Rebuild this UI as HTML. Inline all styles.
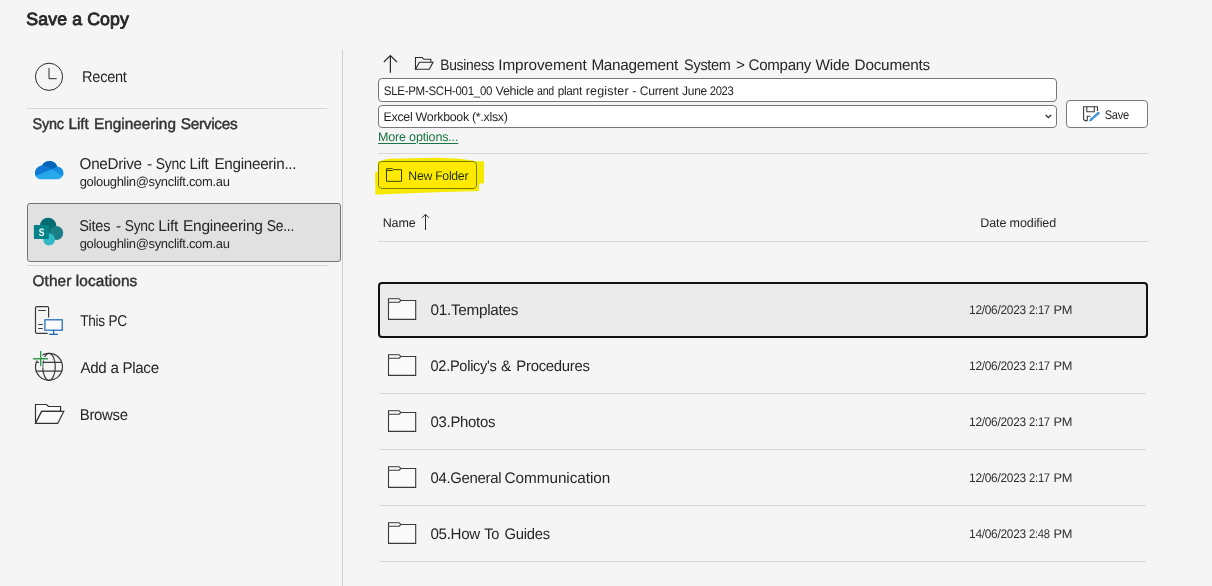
<!DOCTYPE html>
<html lang="en">
<head>
<meta charset="utf-8">
<title>Save a Copy</title>
<style>
html,body{margin:0;padding:0;}
body{width:1212px;height:586px;overflow:hidden;background:#f5f5f5;font-family:"Liberation Sans",sans-serif;color:#262626;text-rendering:geometricPrecision;}
#app{position:relative;width:1212px;height:586px;overflow:hidden;background:#f5f5f5;}
.t{position:absolute;white-space:pre;line-height:1;margin:0;font-weight:400;transform-origin:0 0;}
.w{position:absolute;top:0;transform-origin:0 0;}
.hr{position:absolute;height:1px;background:#d6d6d6;}
.vr{position:absolute;width:1px;background:#cdcdcd;}
.navsel{position:absolute;left:27px;top:203px;width:312px;height:57px;border:1px solid #747474;border-radius:3px;background:#e1e1e1;}
.inp{position:absolute;left:378px;width:677px;border:1px solid #767676;border-radius:4px;background:#fff;}
.btn{position:absolute;border:1px solid #7a7a7a;border-radius:4px;background:#fff;}
.row{position:absolute;left:380px;width:766px;height:55px;border-bottom:1px solid #d6d6d6;}
.rowsel{position:absolute;left:378px;top:282px;width:766px;height:52px;border:2px solid #111;border-radius:4px;background:#ebebeb;}
a.t{text-decoration:underline;text-underline-offset:1.5px;text-decoration-thickness:1px;}
svg{position:absolute;overflow:visible;}
.hl{mix-blend-mode:darken;}
</style>
</head>
<body>
<div id="app">
  <header><h1 class="t" style="left:26.22px;top:11px;letter-spacing:0.143px;font-size:17.7px;color:#262626;-webkit-text-stroke:0.85px #262626;">Save a Copy</h1></header>

  <nav id="places">
    <div class="place">
      <svg style="left:34px;top:62px" width="30" height="30" viewBox="0 0 30 30"><circle cx="15" cy="14.8" r="13.6" fill="none" stroke="#2b2b2b" stroke-width="1"/><path d="M15 6V16.700H22.700" fill="none" stroke="#2b2b2b" stroke-width="1"/></svg>
      <span class="t" style="left:82px;top:70px;letter-spacing:-0.300px;transform:translateX(0.07px) scaleX(0.9364);font-size:15.6px;color:#262626;">Recent</span>
    </div>
    <div class="hr" style="left:27px;top:108px;width:300px"></div>
    <h2 class="t" style="left:0;top:117px;font-size:15.4px;color:#333333;-webkit-text-stroke:0.45px #333333;"><span class="w" style="left:32px;letter-spacing:-0.300px;transform:translateX(0.62px) scaleX(0.9394);">Sync</span> <span class="w" style="left:68.58px;letter-spacing:-0.123px;">Lift</span> <span class="w" style="left:94.07px;letter-spacing:-0.025px;">Engineering</span> <span class="w" style="left:180px;letter-spacing:-0.300px;transform:translateX(0.83px) scaleX(0.9980);">Services</span></h2>
    <div class="place">
      <svg style="left:34.800px;top:160.800px" width="28.500" height="18.200" viewBox="0 0 28.500 18.200">
        <defs><clipPath id="cloud"><path d="M5.800 18.200C2.400 18.200 0 15.600 0 12.200C0 8.300 3 4.900 7 4.400C8.400 1.800 11.200 0 14.400 0C18.200 0 21.400 2.400 22.400 5.800C25.800 6 28.400 8.700 28.400 12C28.400 15.400 25.800 18.200 22.600 18.200Z"/></clipPath></defs>
        <g clip-path="url(#cloud)">
          <rect x="-1" y="-1" width="31" height="21" fill="#28a8ea"/>
          <polygon points="7.200,3.900 17,8.300 1.500,14.400 -1,14.400 -1,-1 7.200,-1" fill="#0f78d4"/>
          <polygon points="17,8.300 22.600,5.600 30,4 30,14 27.300,15.100" fill="#1490df"/>
          <polygon points="7.200,3.900 7.200,-1 23,-1 22.600,5.600 17,8.300" fill="#0364b8"/>
        </g>
      </svg>
      <span class="t" style="left:0;top:157px;font-size:15.6px;color:#262626;"><span class="w" style="left:79px;letter-spacing:-0.300px;transform:translateX(0.56px) scaleX(0.9798);">OneDrive</span> <span class="w" style="left:147.11px;letter-spacing:0.000px;">-</span> <span class="w" style="left:155px;letter-spacing:-0.300px;transform:translateX(0.69px) scaleX(0.8953);">Sync</span> <span class="w" style="left:189px;letter-spacing:-0.300px;transform:translateX(0.59px) scaleX(0.9619);">Lift</span> <span class="w" style="left:214px;letter-spacing:-0.300px;transform:translateX(0.40px) scaleX(0.9782);">Engineerin...</span></span> <span class="t" style="left:79px;top:175px;letter-spacing:-0.300px;transform:translateX(0.63px) scaleX(0.9953);font-size:13.0px;color:#262626;">goloughlin@synclift.com.au</span>
    </div>
    <div class="navsel"></div>
    <div class="place">
      <svg style="left:33px;top:216px" width="32" height="32" viewBox="33 216 32 32">
        <circle cx="48.100" cy="225.800" r="8.100" fill="#036c70"/>
        <circle cx="56.300" cy="233" r="6.900" fill="#1a7f86"/>
        <circle cx="49.100" cy="239.500" r="5.900" fill="#30b8c6"/>
        <rect x="33.900" y="225" width="15" height="14" rx="0.800" fill="#038387"/>
        <text x="38.700" y="235.900" textLength="5.700" lengthAdjust="spacingAndGlyphs" font-family="Liberation Sans, sans-serif" font-weight="700" font-size="10.900" fill="#ffffff">S</text>
      </svg>
      <span class="t" style="left:0;top:219px;font-size:15.6px;color:#262626;"><span class="w" style="left:79px;letter-spacing:-0.300px;transform:translateX(0.14px) scaleX(0.9379);">Sites</span> <span class="w" style="left:116.08px;letter-spacing:0.000px;">-</span> <span class="w" style="left:124px;letter-spacing:-0.300px;transform:translateX(0.73px) scaleX(0.8886);">Sync</span> <span class="w" style="left:158.35px;letter-spacing:-0.255px;">Lift</span> <span class="w" style="left:183px;letter-spacing:-0.300px;transform:translateX(0.02px) scaleX(0.9957);">Engineering</span> <span class="w" style="left:266px;letter-spacing:-0.300px;transform:translateX(0.69px) scaleX(0.8952);">Se...</span></span> <span class="t" style="left:79px;top:237px;letter-spacing:-0.300px;transform:translateX(0.63px) scaleX(0.9953);font-size:13.0px;color:#262626;">goloughlin@synclift.com.au</span>
    </div>
    <div class="hr" style="left:27px;top:265px;width:300px"></div>
    <h2 class="t" style="left:32.50px;top:274px;letter-spacing:0.090px;font-size:15.4px;color:#333333;-webkit-text-stroke:0.45px #333333;">Other locations</h2>
    <div class="place">
      <svg style="left:34px;top:305px" width="30" height="31" viewBox="34 305 30 31" fill="none" stroke-width="1.200">
        <path d="M48.600 317.600V307.800Q48.600 306.600 47.400 306.600H36.700Q35.500 306.600 35.500 307.800V332.100Q35.500 333.300 36.700 333.300H47.700" stroke="#3a3a3a"/>
        <path d="M38.300 310.500H45.800M38.300 324.500H42.800M38.300 328.500H42.800" stroke="#3a3a3a"/>
        <rect x="44.900" y="319.800" width="17.300" height="10.400" fill="#fafafa" stroke="#1565b8"/>
        <path d="M53.600 330.500V334.400M49.100 334.400H58" stroke="#1565b8"/>
      </svg>
      <span class="t" style="left:80px;top:314px;letter-spacing:-0.300px;transform:translateX(0.18px) scaleX(0.8762);font-size:15.6px;color:#262626;">This PC</span>
    </div>
    <div class="place">
      <svg style="left:32px;top:350px" width="32" height="32" viewBox="32 350 32 32" fill="none" stroke-width="1.200">
        <circle cx="49" cy="366.800" r="13.500" stroke="#3a3a3a"/>
        <ellipse cx="49" cy="366.800" rx="6.300" ry="13.500" stroke="#3a3a3a"/>
        <path d="M36.300 362.300H61.700M35.700 371.200H62.300" stroke="#3a3a3a"/>
        <path d="M33 358.700H48.100M40.700 351V366.100" stroke="#f5f5f5" stroke-width="3.600" stroke-linecap="square"/>
        <path d="M33 358.700H48.100M40.700 351V366.100" stroke="#2f9e4f" stroke-width="1.400"/>
      </svg>
      <span class="t" style="left:80px;top:361px;letter-spacing:-0.300px;transform:translateX(0.47px) scaleX(0.9688);font-size:15.6px;color:#262626;">Add a Place</span>
    </div>
    <div class="place">
      <svg style="left:34px;top:403px" width="32" height="22" viewBox="34 403 32 22" fill="#fafafa" stroke="#333" stroke-width="1.200" stroke-linejoin="miter">
        <path d="M35.500 423.400V404.500H46.600L48.400 406.500H60.600V411.400H41.600Z"/>
        <path d="M35.500 423.400L41.600 411.400H63.800L57.700 423.400Z"/>
      </svg>
      <span class="t" style="left:79px;top:408px;letter-spacing:-0.300px;transform:translateX(0.70px) scaleX(0.9591);font-size:15.6px;color:#262626;">Browse</span>
    </div>
  </nav>
  <div class="vr" style="left:342px;top:50px;height:536px"></div>

  <main>
    <div class="crumbs">
      <svg style="left:382px;top:54px" width="18" height="20" viewBox="382 54 18 20" fill="none" stroke="#2b2b2b" stroke-width="1.200"><path d="M390.400 72.800V55.600M383.900 62L390.400 55.500L396.900 62"/></svg>
      <svg style="left:414px;top:56px" width="20" height="15" viewBox="414 56 20 15" fill="none" stroke="#2b2b2b" stroke-width="1.100"><path d="M415.500 69.300V57.500H422.200L423.900 59.300H430.800V62.200"/><path d="M415.500 69.300L419.400 62.200H433L429.300 69.300Z"/></svg>
      <span class="t" style="left:0;top:58px;font-size:15.3px;color:#262626;"><span class="w" style="left:440px;letter-spacing:-0.300px;transform:translateX(0.18px) scaleX(0.9058);">Business</span> <span class="w" style="left:498.30px;letter-spacing:-0.085px;">Improvement</span> <span class="w" style="left:591.38px;letter-spacing:-0.267px;">Management</span> <span class="w" style="left:684px;letter-spacing:-0.300px;transform:translateX(0.08px) scaleX(0.9459);">System</span> <span class="w" style="left:736.03px;letter-spacing:0.000px;">&gt;</span> <span class="w" style="left:748px;letter-spacing:-0.300px;transform:translateX(0.62px) scaleX(0.9856);">Company</span> <span class="w" style="left:815.43px;letter-spacing:-0.186px;">Wide</span> <span class="w" style="left:854.58px;letter-spacing:-0.227px;">Documents</span></span>
    </div>
    <div class="field"><div class="inp" style="top:78px;height:22px"></div><span class="t" style="left:0;top:85px;font-size:12.5px;color:#262626;"><span class="w" style="left:383px;letter-spacing:-0.300px;transform:translateX(0.76px) scaleX(0.9200);">SLE-PM-SCH-001_00</span> <span class="w" style="left:495px;letter-spacing:-0.300px;transform:translateX(0.54px) scaleX(0.9990);">Vehicle</span> <span class="w" style="left:537px;letter-spacing:-0.300px;transform:translateX(0.07px) scaleX(0.8458);">and</span> <span class="w" style="left:557px;letter-spacing:-0.300px;transform:translateX(0.72px) scaleX(0.9444);">plant</span> <span class="w" style="left:585.71px;letter-spacing:0.168px;">register</span> <span class="w" style="left:632.18px;letter-spacing:0.000px;">-</span> <span class="w" style="left:639px;letter-spacing:-0.300px;transform:translateX(0.81px) scaleX(0.9707);">Current</span> <span class="w" style="left:682px;letter-spacing:-0.300px;transform:translateX(0.09px) scaleX(0.9576);">June</span> <span class="w" style="left:709px;letter-spacing:-0.300px;transform:translateX(0.70px) scaleX(0.8952);">2023</span></span></div>
    <div class="field"><div class="inp" style="top:105px;height:21px"></div><span class="t" style="left:383px;top:111px;letter-spacing:-0.300px;transform:translateX(0.57px) scaleX(0.9930);font-size:12.5px;color:#262626;">Excel Workbook (*.xlsx)</span>
      <svg style="left:1044px;top:113px" width="9" height="7" viewBox="1044 113 9 7" fill="none" stroke="#2b2b2b" stroke-width="1.200"><path d="M1045.700 115L1048.400 117.700L1051.100 115"/></svg>
    </div>
    <div class="action"><div class="btn" style="left:1066px;top:100px;width:80px;height:26px"></div>
      <svg style="left:1082px;top:105px" width="18" height="18" viewBox="1082 105 18 18" fill="none" stroke-width="1.100">
        <path d="M1097.500 111V106.700H1083.600V119.300L1084.900 120.600H1087.300V116.200H1090.500" stroke="#3a3a3a"/>
        <path d="M1086.800 106.700V111.800H1094.300V106.700" stroke="#3a3a3a"/>
        <path d="M1090 120.600L1098.400 113" stroke="#ffffff" stroke-width="4.400" stroke-linecap="round"/>
        <path d="M1091.300 119.400L1098.400 113.100" stroke="#2b88d8" stroke-width="2.500" stroke-linecap="round"/>
        <polygon points="1089,121.500 1092.200,120.400 1090.400,118.400" fill="#2b88d8" stroke="none"/>
        <path d="M1091.600 119.200L1097.600 113.800" stroke="#ffffff" stroke-width="0.600" stroke-dasharray="1 0.900"/>
      </svg>
      <span class="t" style="left:1104px;top:109px;letter-spacing:-0.300px;transform:translateX(0.64px) scaleX(0.8890);font-size:12.5px;color:#262626;">Save</span>
    </div>
    <a class="t" style="left:378.00px;top:131px;letter-spacing:-0.166px;font-size:12.5px;color:#1a7343;">More options...</a>
    <div class="hr" style="left:378px;top:153px;width:770px"></div>
    <div class="action"><div class="btn" style="left:378px;top:161px;width:97px;height:26px"></div>
      <svg style="left:385px;top:167px" width="18" height="16" viewBox="385 167 18 16" fill="none" stroke="#3a3a3a" stroke-width="1"><path d="M386.500 168.700H392.600L393.600 169.700H401.500V181.300H386.500Z"/><path d="M386.500 170.600H392.600L393.600 169.700"/></svg>
      <span class="t" style="left:408px;top:170px;letter-spacing:-0.300px;transform:translateX(0.35px) scaleX(0.9823);font-size:12.5px;color:#262626;">New Folder</span>
      <svg class="hl" style="left:374px;top:156px" width="112" height="40" viewBox="374 156 112 40"><polygon points="377.800,161.400 388.400,158.700 436.200,157.700 460.100,158.800 476.400,161.200 484.100,161.200 484.100,183.200 479.300,183.700 478.800,190.900 436.200,192.300 383.600,194.200 375.400,194.700 375.100,172.200 377.800,171.700" fill="#ffe900"/></svg>
    </div>
    <div class="thead"><span class="t" style="left:382.63px;top:217px;letter-spacing:-0.095px;font-size:12.5px;color:#262626;">Name</span>
      <svg style="left:421px;top:213px" width="10" height="18" viewBox="421 213 10 18" fill="none" stroke="#2b2b2b" stroke-width="1"><path d="M425.500 230V214.300M422.100 217.800L425.500 214.300L428.900 217.800"/></svg>
      <span class="t" style="left:980.25px;top:217px;letter-spacing:-0.101px;font-size:12.5px;color:#262626;">Date modified</span></div>
    <div class="hr" style="left:378px;top:241px;width:770px"></div>
    <div class="rowsel"></div>
    <div class="row" style="top:338px"></div>
    <div class="row" style="top:394px"></div>
    <div class="row" style="top:450px"></div>
    <div class="row" style="top:506px"></div>
    <div class="file"><svg style="left:387px;top:298px" width="30" height="23" viewBox="387 298 30 23" fill="#fafafa" stroke="#3a3a3a" stroke-width="1.100"><path d="M388.500 298.700H399.200L400.800 300.500H415.700V319.400H388.500Z"/><path d="M388.500 302.200H399.200L400.800 300.500" fill="none"/></svg><span class="t" style="left:430.50px;top:303px;letter-spacing:-0.286px;font-size:15.3px;color:#262626;">01.Templates</span> <span class="t" style="left:0;top:304px;font-size:12.5px;color:#303030;"><span class="w" style="left:969px;letter-spacing:-0.300px;transform:translateX(0.04px) scaleX(0.9532);">12/06/2023</span> <span class="w" style="left:1029px;letter-spacing:-0.300px;transform:translateX(0.06px) scaleX(0.8973);">2:17</span> <span class="w" style="left:1053px;letter-spacing:-0.300px;transform:translateX(0.59px) scaleX(1.0241);">PM</span></span></div>
    <div class="file"><svg style="left:387px;top:354px" width="30" height="23" viewBox="387 298 30 23" fill="#fafafa" stroke="#3a3a3a" stroke-width="1.100"><path d="M388.500 298.700H399.200L400.800 300.500H415.700V319.400H388.500Z"/><path d="M388.500 302.200H399.200L400.800 300.500" fill="none"/></svg><span class="t" style="left:0;top:359px;font-size:15.3px;color:#262626;"><span class="w" style="left:430px;letter-spacing:-0.300px;transform:translateX(0.50px) scaleX(0.9534);">02.Policy&#x27;s</span> <span class="w" style="left:501.09px;letter-spacing:0.000px;">&amp;</span> <span class="w" style="left:516px;letter-spacing:-0.300px;transform:translateX(0.36px) scaleX(0.9747);">Procedures</span></span> <span class="t" style="left:0;top:360px;font-size:12.5px;color:#303030;"><span class="w" style="left:969px;letter-spacing:-0.300px;transform:translateX(0.04px) scaleX(0.9532);">12/06/2023</span> <span class="w" style="left:1029px;letter-spacing:-0.300px;transform:translateX(0.06px) scaleX(0.8973);">2:17</span> <span class="w" style="left:1053px;letter-spacing:-0.300px;transform:translateX(0.59px) scaleX(1.0241);">PM</span></span></div>
    <div class="file"><svg style="left:387px;top:410px" width="30" height="23" viewBox="387 298 30 23" fill="#fafafa" stroke="#3a3a3a" stroke-width="1.100"><path d="M388.500 298.700H399.200L400.800 300.500H415.700V319.400H388.500Z"/><path d="M388.500 302.200H399.200L400.800 300.500" fill="none"/></svg><span class="t" style="left:430px;top:415px;letter-spacing:-0.300px;transform:translateX(0.50px) scaleX(0.9772);font-size:15.3px;color:#262626;">03.Photos</span> <span class="t" style="left:0;top:416px;font-size:12.5px;color:#303030;"><span class="w" style="left:969px;letter-spacing:-0.300px;transform:translateX(0.04px) scaleX(0.9532);">12/06/2023</span> <span class="w" style="left:1029px;letter-spacing:-0.300px;transform:translateX(0.06px) scaleX(0.8973);">2:17</span> <span class="w" style="left:1053px;letter-spacing:-0.300px;transform:translateX(0.59px) scaleX(1.0241);">PM</span></span></div>
    <div class="file"><svg style="left:387px;top:466px" width="30" height="23" viewBox="387 298 30 23" fill="#fafafa" stroke="#3a3a3a" stroke-width="1.100"><path d="M388.500 298.700H399.200L400.800 300.500H415.700V319.400H388.500Z"/><path d="M388.500 302.200H399.200L400.800 300.500" fill="none"/></svg><span class="t" style="left:0;top:471px;font-size:15.3px;color:#262626;"><span class="w" style="left:430px;letter-spacing:-0.300px;transform:translateX(0.50px) scaleX(0.9723);">04.General</span> <span class="w" style="left:504.62px;letter-spacing:-0.054px;">Communication</span></span> <span class="t" style="left:0;top:472px;font-size:12.5px;color:#303030;"><span class="w" style="left:969px;letter-spacing:-0.300px;transform:translateX(0.04px) scaleX(0.9532);">12/06/2023</span> <span class="w" style="left:1029px;letter-spacing:-0.300px;transform:translateX(0.06px) scaleX(0.8973);">2:17</span> <span class="w" style="left:1053px;letter-spacing:-0.300px;transform:translateX(0.59px) scaleX(1.0241);">PM</span></span></div>
    <div class="file"><svg style="left:387px;top:522px" width="30" height="23" viewBox="387 298 30 23" fill="#fafafa" stroke="#3a3a3a" stroke-width="1.100"><path d="M388.500 298.700H399.200L400.800 300.500H415.700V319.400H388.500Z"/><path d="M388.500 302.200H399.200L400.800 300.500" fill="none"/></svg><span class="t" style="left:0;top:527px;font-size:15.3px;color:#262626;"><span class="w" style="left:430px;letter-spacing:-0.300px;transform:translateX(0.50px) scaleX(0.9881);">05.How</span> <span class="w" style="left:484px;letter-spacing:-0.300px;transform:translateX(0.18px) scaleX(0.9523);">To</span> <span class="w" style="left:504px;letter-spacing:-0.300px;transform:translateX(0.60px) scaleX(0.9682);">Guides</span></span> <span class="t" style="left:0;top:528px;font-size:12.5px;color:#303030;"><span class="w" style="left:969px;letter-spacing:-0.300px;transform:translateX(0.04px) scaleX(0.9532);">14/06/2023</span> <span class="w" style="left:1029px;letter-spacing:-0.300px;transform:translateX(0.06px) scaleX(0.8944);">2:48</span> <span class="w" style="left:1053px;letter-spacing:-0.300px;transform:translateX(0.59px) scaleX(1.0241);">PM</span></span></div>
  </main>
</div>
</body>
</html>
